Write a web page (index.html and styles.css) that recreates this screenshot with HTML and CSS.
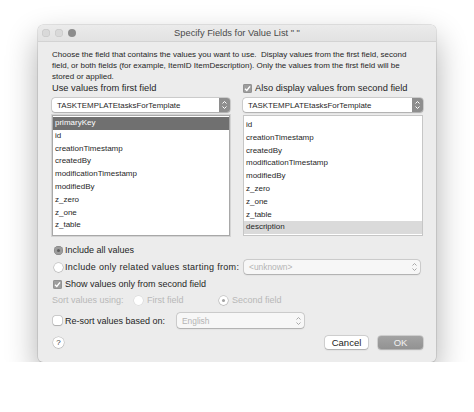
FILE: index.html
```html
<!DOCTYPE html>
<html lang="en">
<head>
    <meta charset="UTF-8">
    <title>Specify Fields for Value List</title>
    <link rel="stylesheet" href="styles.css">
</head>
<body>
    <div class="window">
        <div class="titlebar">
            <div class="lights">
                <span class="light"></span>
                <span class="light"></span>
                <span class="light dark"></span>
            </div>
            <div class="title">Specify Fields for Value List " "</div>
        </div>

        <div class="content">
            <p class="intro">Choose the field that contains the values you want to use.&nbsp; Display values from the first field, second<br>field, or both fields (for example, ItemID ItemDescription). Only the values from the first field will be<br>stored or applied.</p>

            <div class="columns">
                <div class="col">
                    <div class="col-head">Use values from first field</div>
                    <div class="popup">
                        <span>TASKTEMPLATEtasksForTemplate</span>
                        <span class="stepper">
                            <svg width="11" height="14" viewBox="0 0 11 14"><path d="M3.5 5.5L5.5 3.5L7.5 5.5M3.5 8.5L5.5 10.5L7.5 8.5" fill="none" stroke="#fff" stroke-width="1"/></svg>
                        </span>
                    </div>
                    <ul class="list first">
                        <li class="selected">primaryKey</li>
                        <li>id</li>
                        <li>creationTimestamp</li>
                        <li>createdBy</li>
                        <li>modificationTimestamp</li>
                        <li>modifiedBy</li>
                        <li>z_zero</li>
                        <li>z_one</li>
                        <li>z_table</li>
                    </ul>
                </div>
                <div class="col">
                    <div class="col-head">
                        <span class="check on">
                            <svg width="9" height="9" viewBox="0 0 9 9"><path d="M2 4.7L3.8 6.5L7 2.4" fill="none" stroke="#fff" stroke-width="1.4"/></svg>
                        </span>
                        Also display values from second field
                    </div>
                    <div class="popup">
                        <span>TASKTEMPLATEtasksForTemplate</span>
                        <span class="stepper">
                            <svg width="11" height="14" viewBox="0 0 11 14"><path d="M3.5 5.5L5.5 3.5L7.5 5.5M3.5 8.5L5.5 10.5L7.5 8.5" fill="none" stroke="#fff" stroke-width="1"/></svg>
                        </span>
                    </div>
                    <ul class="list second">
                        <li>id</li>
                        <li>creationTimestamp</li>
                        <li>createdBy</li>
                        <li>modificationTimestamp</li>
                        <li>modifiedBy</li>
                        <li>z_zero</li>
                        <li>z_one</li>
                        <li>z_table</li>
                        <li class="selected">description</li>
                    </ul>
                </div>
            </div>

            <div class="row row-all">
                <span class="radio on"></span>
                Include all values
            </div>

            <div class="row row-related">
                <div class="cell">
                    <span class="radio"></span>
                    <span class="wide">Include only related values starting from:</span>
                </div>
                <div class="popup disabled">
                    <span>&lt;unknown&gt;</span>
                    <span class="stepper">
                        <svg width="11" height="14" viewBox="0 0 11 14"><path d="M3.5 5.5L5.5 3.5L7.5 5.5M3.5 8.5L5.5 10.5L7.5 8.5" fill="none" stroke="#a8a8a8" stroke-width="1"/></svg>
                    </span>
                </div>
            </div>

            <div class="row row-show">
                <span class="check on">
                    <svg width="9" height="9" viewBox="0 0 9 9"><path d="M2 4.7L3.8 6.5L7 2.4" fill="none" stroke="#fff" stroke-width="1.4"/></svg>
                </span>
                Show values only from second field
            </div>

            <div class="row row-sort muted">
                <span class="sort-label">Sort values using:</span>
                <span class="sort-opt first-opt"><span class="radio off"></span>First field</span>
                <span class="sort-opt"><span class="radio dot"></span>Second field</span>
            </div>

            <div class="row row-resort">
                <span class="resort-label">
                    <span class="check"></span>
                    Re-sort values based on:
                </span>
                <div class="popup disabled lang">
                    <span>English</span>
                    <span class="stepper">
                        <svg width="11" height="14" viewBox="0 0 11 14"><path d="M3.5 5.5L5.5 3.5L7.5 5.5M3.5 8.5L5.5 10.5L7.5 8.5" fill="none" stroke="#a8a8a8" stroke-width="1"/></svg>
                    </span>
                </div>
            </div>

            <div class="footer">
                <span class="help">?</span>
                <div class="buttons">
                    <button class="btn">Cancel</button>
                    <button class="btn default">OK</button>
                </div>
            </div>
        </div>
    </div>
</body>
</html>
```

FILE: styles.css
```css
body {
    margin: 0;
    background: #fff;
    font-family: "Liberation Sans", Arial, sans-serif;
    color: #1f1f1f;
}
.window {
    width: 398px;
    height: 337px;
    margin: 25px 0 0 38px;
    background: #ececec;
    border-radius: 5px;
    box-shadow: 0 0 0 0.5px rgba(0,0,0,0.18), 0 14px 32px rgba(0,0,0,0.32);
    display: flex;
    flex-direction: column;
    overflow: hidden;
}
.titlebar {
    height: 16px;
    border-bottom: 1px solid #d3d3d3;
    background: linear-gradient(#ebebeb, #e2e2e2);
    display: grid;
    grid-template-columns: 1fr auto 1fr;
    align-items: center;
}
.lights {
    display: flex;
    gap: 5px;
    padding-left: 4px;
}
.light {
    width: 8px;
    height: 8px;
    border-radius: 50%;
    background: #d9d9d9;
    box-shadow: inset 0 0 0 0.5px #c4c4c4;
}
.light.dark {
    background: #8c8c8c;
    box-shadow: none;
}
.title {
    font-size: 9.3px;
    color: #4a4a4a;
}
.content {
    flex: 1;
    padding: 7px 13px 0 14px;
    display: flex;
    flex-direction: column;
}
.intro {
    margin: 0;
    font-size: 8px;
    line-height: 11px;
    color: #262626;
    white-space: nowrap;
}
.columns {
    display: grid;
    grid-template-columns: 178px 180px;
    column-gap: 13px;
}
.col-head {
    height: 12px;
    display: flex;
    align-items: center;
    gap: 3px;
    font-size: 9.3px;
    white-space: nowrap;
}
.popup {
    margin-top: 4px;
    height: 14px;
    background: #fff;
    border-radius: 3px;
    box-shadow: 0 0 0 0.5px rgba(0,0,0,0.22), 0 0.5px 1.5px rgba(0,0,0,0.18);
    display: flex;
    align-items: center;
    justify-content: space-between;
    padding-left: 5px;
    font-size: 7.9px;
    white-space: nowrap;
}
.stepper {
    width: 11px;
    height: 14px;
    background: #8e8e8e;
    border-radius: 0 3px 3px 0;
    display: flex;
}
.popup.disabled {
    background: #f7f7f7;
    color: #b4b4b4;
    font-size: 8.4px;
    margin-top: 0;
}
.popup.disabled .stepper {
    background: none;
}
.list {
    margin: 3px 0 0;
    padding: 1px 0 0;
    list-style: none;
    height: 121px;
    box-sizing: border-box;
    background: #fff;
    border: 1px solid #c6c6c6;
    font-size: 8px;
}
.list.first {
    border-color: #a8a8a8;
    box-shadow: 0 0 0 1px #d4d4d4;
}
.list.second {
    padding-top: 3px;
}
.list li {
    height: 12.8px;
    line-height: 12.8px;
    padding-left: 2px;
    white-space: nowrap;
}
.list.first li.selected {
    background: #707070;
    color: #fff;
}
.list.second li.selected {
    background: #dadada;
}
.row {
    display: flex;
    align-items: center;
    font-size: 9px;
    white-space: nowrap;
}
.radio {
    width: 9px;
    height: 9px;
    border-radius: 50%;
    background: #fff;
    box-shadow: 0 0 0 0.5px rgba(0,0,0,0.25), 0 0.5px 1px rgba(0,0,0,0.15);
    margin: 0 2px 0 2px;
    display: inline-flex;
    align-items: center;
    justify-content: center;
    flex: none;
}
.radio.on {
    background: #9c9c9c;
    box-shadow: inset 0 0 0 0.5px #7d7d7d;
}
.radio.on::after {
    content: "";
    width: 3px;
    height: 3px;
    border-radius: 50%;
    background: #5e5e5e;
}
.radio.off {
    box-shadow: 0 0 0 0.5px rgba(0,0,0,0.1);
}
.radio.dot::after {
    content: "";
    width: 3px;
    height: 3px;
    border-radius: 50%;
    background: #a3a3a3;
}
.check {
    width: 9px;
    height: 9px;
    border-radius: 2px;
    background: #fff;
    box-shadow: 0 0 0 0.5px rgba(0,0,0,0.25), 0 0.5px 1px rgba(0,0,0,0.15);
    display: inline-flex;
    flex: none;
}
.check.on {
    background: #9d9d9d;
    box-shadow: inset 0 0 0 0.5px #858585;
}
.row-all {
    height: 12px;
    margin-top: 8px;
}
.row-related {
    height: 14px;
    margin-top: 4px;
    display: grid;
    grid-template-columns: 178px 176px;
    column-gap: 14px;
}
.row-related .cell {
    display: flex;
    align-items: center;
}
.row-related .wide {
    letter-spacing: 0.3px;
}
.row-show {
    height: 12px;
    margin-top: 4px;
}
.row-show .check {
    margin: 0 3px 0 1px;
}
.row-sort {
    height: 12px;
    margin-top: 4px;
}
.muted {
    color: #b8b8b8;
}
.sort-label {
    width: 80px;
}
.sort-opt {
    display: flex;
    align-items: center;
}
.sort-opt.first-opt {
    width: 85px;
}
.sort-opt .radio {
    margin-right: 4px;
}
.row-resort {
    height: 15px;
    margin-top: 7px;
}
.resort-label {
    width: 125px;
    display: flex;
    align-items: center;
    gap: 3px;
    padding-left: 1px;
    box-sizing: border-box;
}
.popup.lang {
    width: 127px;
    height: 15px;
    box-sizing: border-box;
}
.footer {
    height: 14px;
    margin-top: 7px;
    display: flex;
    align-items: center;
    justify-content: space-between;
}
.help {
    width: 11px;
    height: 11px;
    margin-left: 1px;
    border-radius: 50%;
    background: #fff;
    box-shadow: 0 0 0 0.5px rgba(0,0,0,0.2), 0 0.5px 1px rgba(0,0,0,0.2);
    font-size: 8px;
    line-height: 11px;
    text-align: center;
    color: #333;
}
.buttons {
    display: flex;
    gap: 10px;
}
.btn {
    height: 13px;
    padding: 0;
    border: none;
    border-radius: 3px;
    background: #fff;
    box-shadow: 0 0 0 0.5px rgba(0,0,0,0.18), 0 0.5px 1.5px rgba(0,0,0,0.2);
    font-family: inherit;
    font-size: 9.5px;
    color: #222;
    width: 43px;
}
.btn.default {
    width: 45px;
    background: linear-gradient(#a3a3a3, #929292);
    color: #f2f2f2;
}
```
